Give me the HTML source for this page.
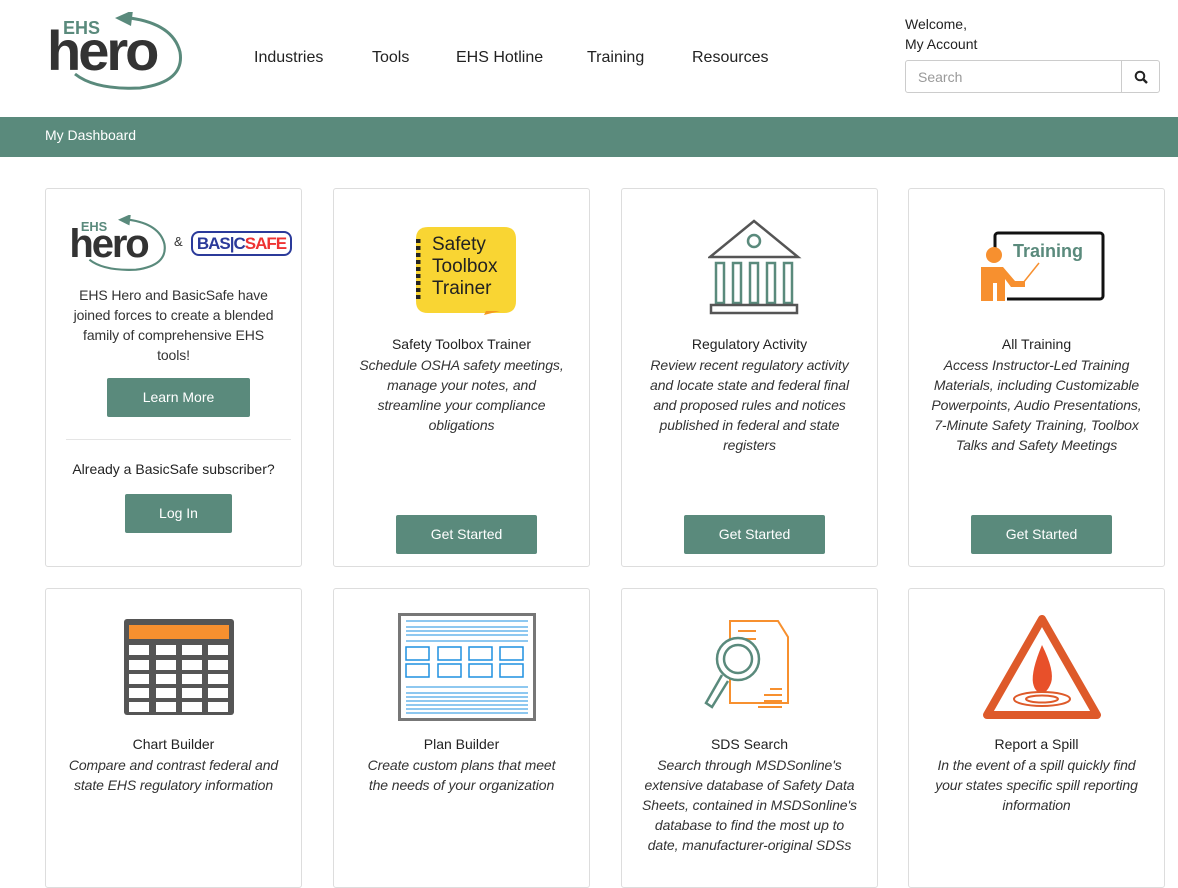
<!DOCTYPE html>
<html><head><meta charset="utf-8"><style>
*{box-sizing:border-box;margin:0;padding:0}
body{width:1178px;height:882px;overflow:hidden;background:#fff;font-family:"Liberation Sans",sans-serif;color:#222;position:relative}
.a{position:absolute}
.nav{top:49px;font-size:16px;color:#222}
.bar{top:117px;left:0;width:1178px;height:40px;background:#5a8a7c;color:#fff;font-size:14px;padding:10px 45px}
.card{position:absolute;width:257px;border:1px solid #ddd;border-radius:3px;text-align:center}
.t{position:absolute;left:0;right:0;font-size:14px;color:#222}
.d{position:absolute;left:0;right:0;font-size:14px;font-style:italic;line-height:20px;color:#333;white-space:nowrap;letter-spacing:-0.1px}
.btn{position:absolute;background:#5a8a7c;color:#fff;font-size:14px;border-radius:2px;height:39px;line-height:39px;text-align:center}
</style></head><body>
<svg class="a" style="left:45px;top:12px" width="140" height="80" viewBox="0 0 140 80">
<path d="M30 62 Q50 78 95 76 Q140 70 135 40 Q128 12 85 6" fill="none" stroke="#5a8a7c" stroke-width="3"/>
<path d="M70 6 L88 -2 L86 14 Z" fill="#5a8a7c"/>
<text x="18" y="22" font-family="Liberation Sans" font-weight="bold" font-size="18" fill="#5a8a7c">EHS</text>
<text x="2" y="58" font-family="Liberation Sans" font-weight="bold" font-size="56" fill="#333" letter-spacing="-3">hero</text>
</svg>
<div class="a nav" style="left:254px">Industries</div>
<div class="a nav" style="left:372px">Tools</div>
<div class="a nav" style="left:456px">EHS Hotline</div>
<div class="a nav" style="left:587px">Training</div>
<div class="a nav" style="left:692px">Resources</div>
<div class="a" style="left:905px;top:16px;font-size:14px">Welcome,</div>
<div class="a" style="left:905px;top:36px;font-size:14px">My Account</div>
<div class="a" style="left:905px;top:60px;width:255px;height:33px;border:1px solid #ccc;border-radius:3px">
<div class="a" style="left:12px;top:8px;font-size:14px;color:#999">Search</div>
<div class="a" style="left:215px;top:0;width:1px;height:31px;background:#ccc"></div>
<svg class="a" style="left:228px;top:9px" width="14" height="14" viewBox="0 0 14 14"><circle cx="6" cy="6" r="4.3" fill="none" stroke="#222" stroke-width="2"/><path d="M9 9 L13 13" stroke="#222" stroke-width="2.4"/></svg>
</div>
<div class="a bar">My Dashboard</div>

<!-- row 1 -->
<div class="card" style="left:45px;top:188px;height:379px">
<svg class="a" style="left:22px;top:26px" width="100" height="58" viewBox="0 0 140 80">
<path d="M30 62 Q50 78 95 76 Q140 70 135 40 Q128 12 85 6" fill="none" stroke="#5a8a7c" stroke-width="3"/>
<path d="M70 6 L88 -2 L86 14 Z" fill="#5a8a7c"/>
<text x="18" y="22" font-family="Liberation Sans" font-weight="bold" font-size="18" fill="#5a8a7c">EHS</text>
<text x="2" y="58" font-family="Liberation Sans" font-weight="bold" font-size="56" fill="#333" letter-spacing="-3">hero</text></svg>
<div class="a" style="left:128px;top:45px;font-size:13px;color:#333">&amp;</div>
<div class="a" style="left:145px;top:42px;width:101px;height:25px;border:2px solid #2b3a9a;border-radius:8px;font-size:17px;font-weight:bold;line-height:21px;letter-spacing:-1px"><span style="color:#2b3a9a">BAS|C</span><span style="color:#e33">SAFE</span></div>
<div class="d" style="top:96px;font-style:normal">EHS Hero and BasicSafe have<br>joined forces to create a blended<br>family of comprehensive EHS<br>tools!</div>
<div class="btn" style="left:61px;top:189px;width:143px">Learn More</div>
<div class="a" style="left:20px;right:10px;top:250px;height:1px;background:#e5e5e5"></div>
<div class="t" style="top:272px">Already a BasicSafe subscriber?</div>
<div class="btn" style="left:79px;top:305px;width:107px">Log In</div>
</div>

<div class="card" style="left:333px;top:188px;height:379px">
<svg class="a" style="left:82px;top:36px" width="100" height="90" viewBox="0 0 100 90"><path d="M12 2 H88 Q100 2 100 14 V76 Q100 88 88 88 H12 Q0 88 0 76 V14 Q0 2 12 2Z" fill="#f9d533"/><path d="M70 86 L84 86 L68 90 Z" fill="#f39a22"/><path d="M2 14 V76" stroke="#222" stroke-width="5" stroke-dasharray="4 3"/>
<text x="16" y="25" font-family="Liberation Sans" font-size="19" fill="#222">Safety</text><text x="16" y="47" font-family="Liberation Sans" font-size="19" fill="#222">Toolbox</text><text x="16" y="69" font-family="Liberation Sans" font-size="19" fill="#222">Trainer</text></svg>
<div class="t" style="top:147px">Safety Toolbox Trainer</div>
<div class="d" style="top:166px">Schedule OSHA safety meetings,<br>manage your notes, and<br>streamline your compliance<br>obligations</div>
<div class="btn" style="left:62px;top:326px;width:141px">Get Started</div>
</div>

<div class="card" style="left:621px;top:188px;height:379px">
<svg class="a" style="left:86px;top:30px" width="94" height="96" viewBox="0 0 94 96"><path d="M46 2 L90 38 H2 Z" fill="none" stroke="#555" stroke-width="2.5"/><circle cx="46" cy="22" r="6" fill="none" stroke="#5a8a7c" stroke-width="2.5"/>
<g fill="none" stroke="#5a8a7c" stroke-width="2.5"><rect x="8" y="44" width="8" height="40"/><rect x="25" y="44" width="8" height="40"/><rect x="42" y="44" width="8" height="40"/><rect x="59" y="44" width="8" height="40"/><rect x="76" y="44" width="8" height="40"/></g>
<rect x="3" y="86" width="86" height="8" fill="none" stroke="#555" stroke-width="2.5"/></svg>
<div class="t" style="top:147px">Regulatory Activity</div>
<div class="d" style="top:166px">Review recent regulatory activity<br>and locate state and federal final<br>and proposed rules and notices<br>published in federal and state<br>registers</div>
<div class="btn" style="left:62px;top:326px;width:141px">Get Started</div>
</div>

<div class="card" style="left:908px;top:188px;height:379px">
<svg class="a" style="left:68px;top:42px" width="130" height="72" viewBox="0 0 130 72"><rect x="18" y="2" width="108" height="66" rx="3" fill="#fff" stroke="#111" stroke-width="3"/><rect x="0" y="26" width="30" height="46" fill="#fff"/>
<text x="36" y="26" font-family="Liberation Sans" font-weight="bold" font-size="18" fill="#5a8a7c">Training</text>
<circle cx="17" cy="24" r="8" fill="#f7902f"/><path d="M4 36 H26 L38 50 L48 50 L48 56 L34 56 L28 48 V70 H20 V52 H16 V70 H4Z" fill="#f7902f"/><path d="M46 52 L62 32" stroke="#f7902f" stroke-width="1.5"/></svg>
<div class="t" style="top:147px">All Training</div>
<div class="d" style="top:166px">Access Instructor-Led Training<br>Materials, including Customizable<br>Powerpoints, Audio Presentations,<br>7-Minute Safety Training, Toolbox<br>Talks and Safety Meetings</div>
<div class="btn" style="left:62px;top:326px;width:141px">Get Started</div>
</div>

<!-- row 2 -->
<div class="card" style="left:45px;top:588px;height:300px">
<svg class="a" style="left:78px;top:30px" width="110" height="96" viewBox="0 0 110 96"><rect x="0" y="0" width="110" height="96" rx="3" fill="#555"/><rect x="5" y="6" width="100" height="14" fill="#f7902f"/>
<g fill="#fff"><rect x="5" y="26" width="20" height="10"/><rect x="32" y="26" width="20" height="10"/><rect x="58" y="26" width="20" height="10"/><rect x="84" y="26" width="20" height="10"/>
<rect x="5" y="41" width="20" height="10"/><rect x="32" y="41" width="20" height="10"/><rect x="58" y="41" width="20" height="10"/><rect x="84" y="41" width="20" height="10"/>
<rect x="5" y="55" width="20" height="10"/><rect x="32" y="55" width="20" height="10"/><rect x="58" y="55" width="20" height="10"/><rect x="84" y="55" width="20" height="10"/>
<rect x="5" y="69" width="20" height="10"/><rect x="32" y="69" width="20" height="10"/><rect x="58" y="69" width="20" height="10"/><rect x="84" y="69" width="20" height="10"/>
<rect x="5" y="83" width="20" height="10"/><rect x="32" y="83" width="20" height="10"/><rect x="58" y="83" width="20" height="10"/><rect x="84" y="83" width="20" height="10"/></g></svg>
<div class="t" style="top:147px">Chart Builder</div>
<div class="d" style="top:166px">Compare and contrast federal and<br>state EHS regulatory information</div>
</div>

<div class="card" style="left:333px;top:588px;height:300px">
<svg class="a" style="left:64px;top:24px" width="138" height="108" viewBox="0 0 138 108"><rect x="1.5" y="1.5" width="135" height="105" fill="#fff" stroke="#777" stroke-width="3"/>
<g stroke="#1e90e0" stroke-width="1"><path d="M8 8H130M8 14H130M8 18H130M8 22H130M8 28H130M8 74H130M8 80H130M8 84H130M8 88H130M8 92H130M8 96H130M8 100H130"/></g>
<g fill="none" stroke="#1e90e0" stroke-width="1.5"><rect x="8" y="34" width="23" height="13"/><rect x="40" y="34" width="23" height="13"/><rect x="71" y="34" width="23" height="13"/><rect x="102" y="34" width="23" height="13"/><rect x="8" y="51" width="23" height="13"/><rect x="40" y="51" width="23" height="13"/><rect x="71" y="51" width="23" height="13"/><rect x="102" y="51" width="23" height="13"/></g></svg>
<div class="t" style="top:147px">Plan Builder</div>
<div class="d" style="top:166px">Create custom plans that meet<br>the needs of your organization</div>
</div>

<div class="card" style="left:621px;top:588px;height:300px">
<svg class="a" style="left:80px;top:30px" width="92" height="96" viewBox="0 0 92 96"><path d="M28 2 H76 L86 18 V84 H28 Z" fill="#fff" stroke="#f7902f" stroke-width="2"/>
<g stroke="#f7902f" stroke-width="2"><path d="M36 12H54M36 20H54M68 70H80M62 76H80M62 82H80M56 88H80"/></g>
<circle cx="36" cy="40" r="21" fill="#fff" stroke="#5a8a7c" stroke-width="2.5"/><circle cx="36" cy="40" r="14" fill="none" stroke="#5a8a7c" stroke-width="2.5"/>
<path d="M20 56 L4 84 L10 88 L26 62" fill="#fff" stroke="#5a8a7c" stroke-width="2.5"/></svg>
<div class="t" style="top:147px">SDS Search</div>
<div class="d" style="top:166px">Search through MSDSonline's<br>extensive database of Safety Data<br>Sheets, contained in MSDSonline's<br>database to find the most up to<br>date, manufacturer-original SDSs</div>
</div>

<div class="card" style="left:908px;top:588px;height:300px">
<svg class="a" style="left:74px;top:26px" width="118" height="104" viewBox="0 0 118 104"><path d="M59 4 L114 100 H4 Z" fill="#fff" stroke="#de5a2a" stroke-width="8" stroke-linejoin="round"/>
<path d="M59 30 Q72 56 68 68 Q64 78 59 78 Q52 78 50 68 Q48 56 59 30Z" fill="#e8502a"/>
<ellipse cx="59" cy="84" rx="28" ry="7" fill="none" stroke="#de5a2a" stroke-width="2"/><ellipse cx="59" cy="84" rx="16" ry="3.5" fill="none" stroke="#de5a2a" stroke-width="2"/></svg>
<div class="t" style="top:147px">Report a Spill</div>
<div class="d" style="top:166px">In the event of a spill quickly find<br>your states specific spill reporting<br>information</div>
</div>
</body></html>
